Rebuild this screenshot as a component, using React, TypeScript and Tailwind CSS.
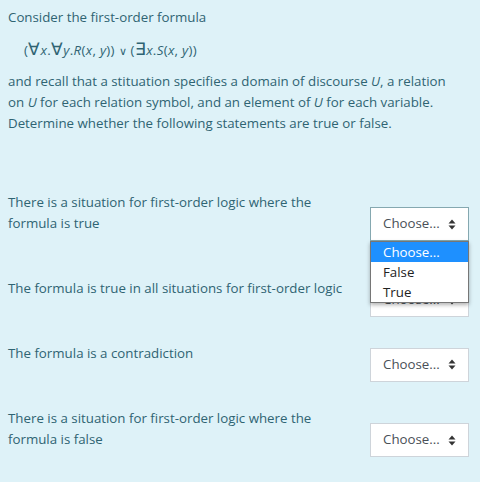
import React from "react";

const font = { fontFamily: '"Open Sans", "Noto Sans", sans-serif' };

function Arrows() {
  return (
    <svg width="8" height="11" viewBox="0 0 8 11" className="shrink-0">
      <path d="M4 0.5 L7.5 4.5 L0.5 4.5 Z" fill="#333" />
      <path d="M4 10.5 L7.5 6.5 L0.5 6.5 Z" fill="#333" />
    </svg>
  );
}

function SelectBox({ focused = false }: { focused?: boolean }) {
  return (
    <div
      className={`w-[99px] h-[34px] bg-white border flex items-center justify-between pl-[12px] pr-[12px] text-[13.3px] text-[#495057] ${
        focused ? "border-[#85a8b0]" : "border-[#ced4da]"
      }`}
    >
      <span>Choose...</span>
      <Arrows />
    </div>
  );
}

function Row({
  text,
  focused,
  open,
}: {
  text: React.ReactNode;
  focused?: boolean;
  open?: boolean;
}) {
  return (
    <div className="flex items-center">
      <div className="w-[362px] pb-[22px] leading-[21px] text-[13.3px]">
        <div className="w-[350px]">{text}</div>
      </div>
      <div className="relative">
        <SelectBox focused={focused} />
        {open && (
          <div className="absolute left-0 top-[34px] w-[99px] bg-white border border-[#767676] shadow-[0_2px_4px_rgba(0,0,0,0.3)] text-[13.3px] text-[#222] z-10">
            <div className="h-[20px] leading-[20px] pl-[12px] bg-[#1e90ff] text-white">Choose...</div>
            <div className="h-[20px] leading-[20px] pl-[12px]">False</div>
            <div className="h-[20px] leading-[20px] pl-[12px]">True</div>
          </div>
        )}
      </div>
    </div>
  );
}

export default function App() {
  return (
    <div className="w-[480px] h-[482px] bg-[#def2f8] text-[#2f6473] overflow-hidden" style={font}>
      <div className="pl-[8px] pt-[7px]">
        <p className="text-[13.3px] leading-[21px]">Consider the first-order formula</p>
        <p className="text-[13.3px] leading-[21px] pl-[16px] mt-[12px] whitespace-nowrap tracking-[0.3px]">
          (<span className="text-[17px] leading-[0]">∀</span>
          <i>x</i>.<span className="text-[17px] leading-[0]">∀</span>
          <i>y</i>.<i>R</i>(<i>x</i>, <i>y</i>)) <span className="text-[11px]">∨</span> (
          <span className="text-[17px] leading-[0]">∃</span>
          <i>x</i>.<i>S</i>(<i>x</i>, <i>y</i>))
        </p>
        <p className="text-[13.3px] leading-[21px] mt-[10px] w-[450px]">
          and recall that a stituation specifies a domain of discourse <i>U</i>, a relation on{" "}
          <i>U</i> for each relation symbol, and an element of <i>U</i> for each variable.
          Determine whether the following statements are true or false.
        </p>
        <div className="mt-[58px] flex flex-col gap-[22px]">
          <Row text="There is a situation for first-order logic where the formula is true" focused open />
          <Row text="The formula is true in all situations for first-order logic" />
          <Row text="The formula is a contradiction" />
          <Row text="There is a situation for first-order logic where the formula is false" />
        </div>
      </div>
    </div>
  );
}
